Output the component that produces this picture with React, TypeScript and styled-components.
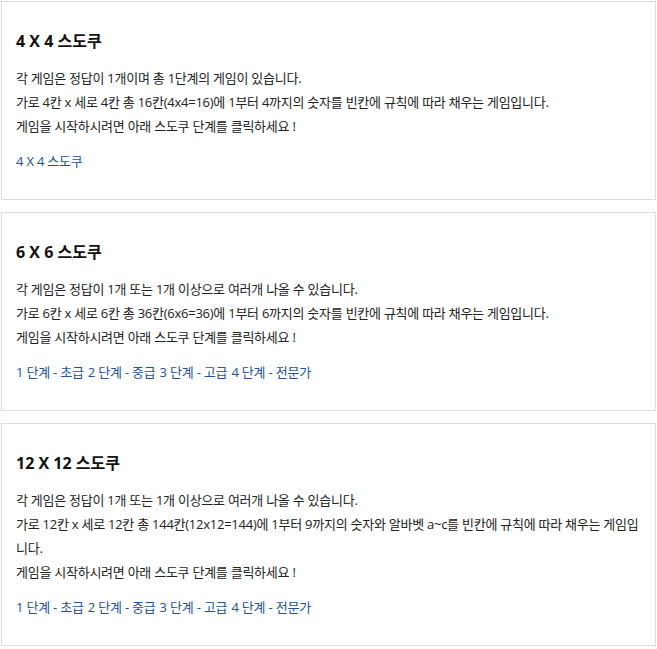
import React from 'react'
import styled, { createGlobalStyle } from 'styled-components'

const GlobalStyle = createGlobalStyle`
  body {
    margin: 0;
    background: #fff;
    font-family: "Open Sans", "Noto Sans CJK KR", sans-serif;
    color: #222;
  }
`

const List = styled.div`
  display: flex;
  flex-direction: column;
  gap: 12px;
  padding: 1px 1px 2px 1px;
`

const Card = styled.section`
  border: 1px solid #ddd;
  padding: 28px 14px 26px;
`

const Title = styled.h3`
  margin: 0 0 14px;
  font-size: 16px;
  line-height: 22px;
  font-weight: 700;
  color: #111;
`

const Desc = styled.p`
  margin: 0;
  font-size: 13px;
  line-height: 24px;
  letter-spacing: -0.25px;
  word-break: break-all;
`

const Links = styled.div`
  margin-top: 11px;
  font-size: 13px;
  line-height: 24px;
  letter-spacing: -0.2px;
`

const Level = styled.a`
  color: #23529a;
  text-decoration: none;
  cursor: pointer;
  & + & {
    margin-left: 4px;
  }
`

type Game = {
  title: string
  lines: string[]
  levels: string[]
}

const intro = '게임을 시작하시려면 아래 스도쿠 단계를 클릭하세요 !'

const games: Game[] = [
  {
    title: '4 X 4 스도쿠',
    lines: [
      '각 게임은 정답이 1개이며 총 1단계의 게임이 있습니다.',
      '가로 4칸 x 세로 4칸 총 16칸(4x4=16)에 1부터 4까지의 숫자를 빈칸에 규칙에 따라 채우는 게임입니다.',
      intro,
    ],
    levels: ['4 X 4 스도쿠'],
  },
  {
    title: '6 X 6 스도쿠',
    lines: [
      '각 게임은 정답이 1개 또는 1개 이상으로 여러개 나올 수 있습니다.',
      '가로 6칸 x 세로 6칸 총 36칸(6x6=36)에 1부터 6까지의 숫자를 빈칸에 규칙에 따라 채우는 게임입니다.',
      intro,
    ],
    levels: ['1 단계 - 초급', '2 단계 - 중급', '3 단계 - 고급', '4 단계 - 전문가'],
  },
  {
    title: '12 X 12 스도쿠',
    lines: [
      '각 게임은 정답이 1개 또는 1개 이상으로 여러개 나올 수 있습니다.',
      '가로 12칸 x 세로 12칸 총 144칸(12x12=144)에 1부터 9까지의 숫자와 알바벳 a~c를 빈칸에 규칙에 따라 채우는 게임입니다.',
      intro,
    ],
    levels: ['1 단계 - 초급', '2 단계 - 중급', '3 단계 - 고급', '4 단계 - 전문가'],
  },
]

export default function App() {
  return (
    <>
      <GlobalStyle />
      <List>
        {games.map((g) => (
          <Card key={g.title}>
            <Title>{g.title}</Title>
            {g.lines.map((line) => (
              <Desc key={line}>{line}</Desc>
            ))}
            <Links>
              {g.levels.map((lv) => (
                <Level key={lv}>{lv}</Level>
              ))}
            </Links>
          </Card>
        ))}
      </List>
    </>
  )
}
